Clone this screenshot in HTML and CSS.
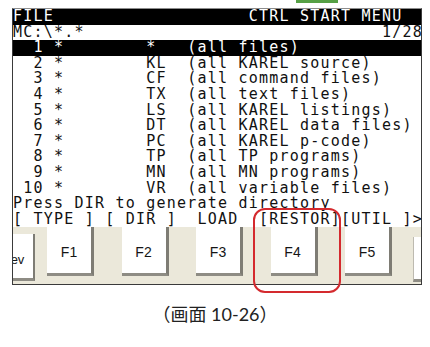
FILE: index.html
```html
<!DOCTYPE html>
<html lang="zh">
<head>
  <meta charset="UTF-8">
  <title>FILE - select</title>
  <link rel="stylesheet" href="styles.css">
</head>
<body>
  <div class="led"></div>

  <div class="pendant">
    <div class="screen">
      <div class="line title">FILE                   CTRL START MENU</div>
      <div class="line">MC:\*.*                             1/28</div>
      <div class="line sel">  1 *        *   (all files)</div>
      <div class="line">  2 *        KL  (all KAREL source)</div>
      <div class="line">  3 *        CF  (all command files)</div>
      <div class="line">  4 *        TX  (all text files)</div>
      <div class="line">  5 *        LS  (all KAREL listings)</div>
      <div class="line">  6 *        DT  (all KAREL data files)</div>
      <div class="line">  7 *        PC  (all KAREL p-code)</div>
      <div class="line">  8 *        TP  (all TP programs)</div>
      <div class="line">  9 *        MN  (all MN programs)</div>
      <div class="line"> 10 *        VR  (all variable files)</div>
      <div class="line">Press DIR to generate directory</div>
      <div class="line">[ TYPE ] [ DIR ]  LOAD  [RESTOR][UTIL ]&gt;</div>
    </div>

    <div class="fkeys">
      <div class="key prev">Prev</div>
      <div class="key fk first">F1</div>
      <div class="key fk">F2</div>
      <div class="key fk">F3</div>
      <div class="key fk">F4</div>
      <div class="key fk">F5</div>
      <div class="key next">Next</div>
    </div>
  </div>

  <!-- red mark around F4 -->
  <div class="mark"></div>

  <p class="caption">（画面 10-26）</p>
</body>
</html>
```

FILE: styles.css
```css
body {
  margin: 0;
  background: #fff;
  width: 430px;
  height: 347px;
  overflow: hidden;
  position: relative;
}

.led {
  margin-left: 296px;
  width: 42px;
  height: 3px;
  background: #56a045;
}

.pendant {
  box-sizing: border-box;
  margin: 5px 0 0 12px;
  width: 410px;
  height: 277px;
  border: 1px solid #3a3a3a;
  border-top-color: #8c8c8c;
  display: flex;
  flex-direction: column;
  overflow: hidden;
}

.screen {
  font-family: "DejaVu Sans Mono", monospace;
  font-size: 15px;
  letter-spacing: 1.22px;
  color: #111;
  background: #fff;
}

.line {
  height: 15.6px;
  line-height: 15.6px;
  white-space: pre;
}

.title,
.sel {
  background: #000;
  color: #fff;
}

.fkeys {
  flex: 1;
  display: flex;
  align-items: flex-start;
  background: #ebe8da;
  overflow: hidden;
  font-family: "Liberation Sans", Arial, sans-serif;
  font-size: 14px;
  color: #151515;
}

.key {
  box-sizing: border-box;
  flex: none;
  background: #fff;
  border-right: 3px solid #7e7c74;
  border-bottom: 3px solid #8e8c84;
  display: flex;
  align-items: center;
  justify-content: center;
}

.fk {
  width: 47px;
  height: 49px;
  padding-top: 4px;
  margin-left: 27.5px;
}

.fk.first {
  margin-left: 12px;
}

.prev {
  width: 46px;
  height: 47px;
  margin: 7px 0 0 -24px;
  padding-top: 6px;
  font-size: 13px;
  border-right-width: 2px;
}

.next {
  width: 40px;
  height: 45px;
  margin: 10px 0 0 21px;
  justify-content: flex-start;
  padding-left: 7px;
  border-left: 1px solid #bdbab0;
}

.mark {
  position: absolute;
  left: 253px;
  top: 208px;
  width: 84px;
  height: 81px;
  border: 2px solid #d42a2e;
  border-radius: 12px;
}

.caption {
  margin: 17px 0 0;
  text-align: center;
  font-family: Lato, "Noto Sans CJK SC", sans-serif;
  font-size: 18px;
  line-height: 24px;
  color: #222;
}
```
